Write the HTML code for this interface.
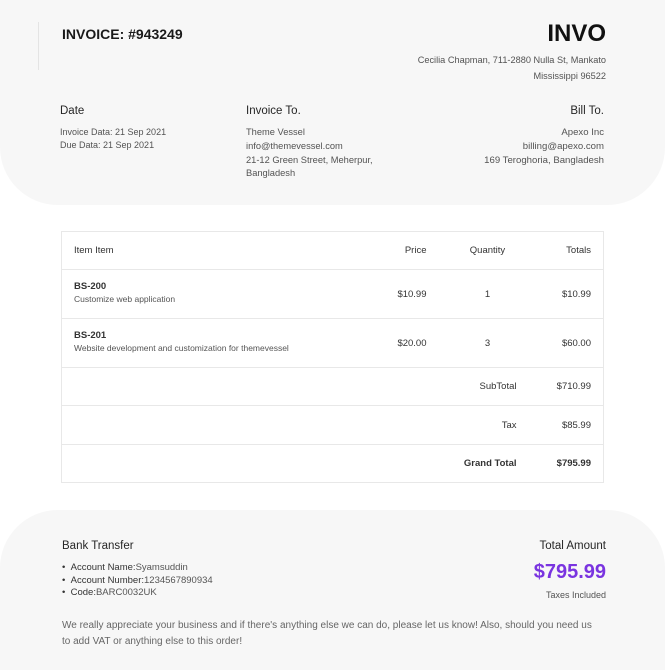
<!DOCTYPE html>
<html><head><meta charset="utf-8"><style>
*{margin:0;padding:0;box-sizing:border-box}
body{width:665px;height:665px;background:#fff;font-family:"Liberation Sans",sans-serif;color:#535353;position:relative;overflow:hidden}
.top{position:absolute;left:0;top:0;width:665px;height:205px;background:#f7f7f7;border-radius:0 0 58px 58px}
.bot{position:absolute;left:0;top:510px;width:665px;height:160px;background:#f7f7f7;border-radius:58px 58px 0 0}
.a{position:absolute;white-space:nowrap}
.s{font-size:9px;line-height:12.5px}
.h{font-size:11.5px;color:#262626}
.r{text-align:right}
table{position:absolute;left:61px;top:231px;width:543px;border-collapse:collapse;font-size:9.5px;color:#333;table-layout:fixed}
td{border-top:1px solid #e8e8e8;border-bottom:1px solid #e8e8e8;padding:0 12px;vertical-align:middle;white-space:nowrap}
table{border:1px solid #e8e8e8}
</style></head><body>
<div class="top"></div>
<div class="bot"></div>
<div class="a" style="left:38px;top:22px;width:1px;height:48px;background:#e4e4e4"></div>
<div class="a" style="left:62px;top:26px;font-size:14px;font-weight:bold;color:#1a1a1a">INVOICE: #943249</div>
<div class="a" style="right:59px;top:20px;font-size:24px;font-weight:bold;color:#111">INVO</div>
<div class="a s r" style="right:59px;top:53px;font-size:9.2px;line-height:15.5px">Cecilia Chapman, 711-2880 Nulla St, Mankato<br>Mississippi 96522</div>
<div class="a h" style="left:60px;top:105px">Date</div>
<div class="a s" style="left:60px;top:126px">Invoice Data: 21 Sep 2021<br>Due Data: 21 Sep 2021</div>
<div class="a h" style="left:246px;top:105px">Invoice To.</div>
<div class="a s" style="left:246px;top:126px;line-height:13.8px;font-size:9.3px">Theme Vessel<br>info@themevessel.com<br>21-12 Green Street, Meherpur,<br>Bangladesh</div>
<div class="a h r" style="right:61px;top:105px">Bill To.</div>
<div class="a s r" style="right:61px;top:126px;line-height:13.8px;font-size:9.6px">Apexo Inc<br>billing@apexo.com<br>169 Teroghoria, Bangladesh</div>
<table>
<colgroup><col><col style="width:80px"><col style="width:98px"><col style="width:67px"></colgroup>
<tr style="height:38px"><td>Item Item</td><td style="text-align:right">Price</td><td style="text-align:center">Quantity</td><td style="text-align:right">Totals</td></tr>
<tr style="height:49px"><td><span style="font-weight:bold;color:#333">BS-200</span><br><span style="font-size:8.5px;color:#555;line-height:15px">Customize web application</span></td><td style="text-align:right">$10.99</td><td style="text-align:center">1</td><td style="text-align:right">$10.99</td></tr>
<tr style="height:49px"><td><span style="font-weight:bold;color:#333">BS-201</span><br><span style="font-size:8.5px;color:#555;line-height:15px">Website development and customization for themevessel</span></td><td style="text-align:right">$20.00</td><td style="text-align:center">3</td><td style="text-align:right">$60.00</td></tr>
<tr style="height:38px"><td></td><td></td><td style="text-align:right;padding-right:20px">SubTotal</td><td style="text-align:right">$710.99</td></tr>
<tr style="height:39px"><td></td><td></td><td style="text-align:right;padding-right:20px">Tax</td><td style="text-align:right">$85.99</td></tr>
<tr style="height:38px;font-weight:bold"><td></td><td></td><td style="text-align:right;padding-right:20px">Grand Total</td><td style="text-align:right">$795.99</td></tr>
</table>
<div class="a h" style="left:62px;top:540px">Bank Transfer</div>
<div class="a s" style="left:62px;top:562px;color:#333;font-size:9.5px">
<div>•&nbsp;&nbsp;Account Name:<span style="color:#555">Syamsuddin</span></div>
<div>•&nbsp;&nbsp;Account Number:<span style="color:#555">1234567890934</span></div>
<div>•&nbsp;&nbsp;Code:<span style="color:#555">BARC0032UK</span></div></div>
<div class="a h r" style="right:59px;top:540px">Total Amount</div>
<div class="a r" style="right:59px;top:561px;font-size:20px;font-weight:bold;color:#7a34e0">$795.99</div>
<div class="a s r" style="right:59px;top:589px">Taxes Included</div>
<div class="a s" style="left:62px;top:618px;line-height:15.5px;color:#666;font-size:10px">We really appreciate your business and if there's anything else we can do, please let us know! Also, should you need us<br>to add VAT or anything else to this order!</div>
</body></html>
